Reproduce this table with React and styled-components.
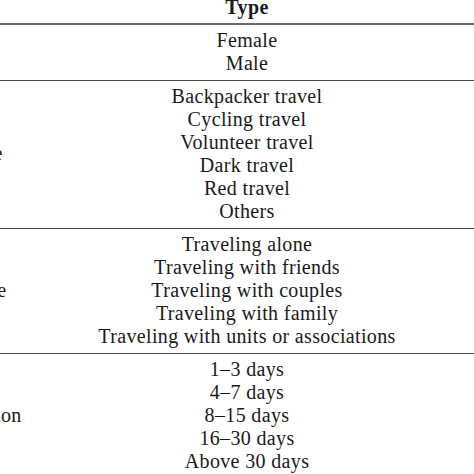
import styled, { createGlobalStyle } from "styled-components";

const GlobalStyle = createGlobalStyle`
  html, body {
    margin: 0;
    padding: 0;
    background: #fff;
    overflow: hidden;
  }
`;

const Page = styled.div`
  width: 474px;
  height: 474px;
  overflow: hidden;
  font-family: "Liberation Serif", "Times New Roman", serif;
  font-size: 20px;
  letter-spacing: 0.35px;
  line-height: 23px;
  color: #1a1a1a;
`;

const Table = styled.div`
  display: grid;
  grid-template-columns: 172px 334px 1fr;
  width: 660px;
  margin-left: -92px;
  margin-top: -4px;
`;

const Cell = styled.div`
  padding: ${({ $header }) => ($header ? "0 0 4px" : "3.5px 0 5.5px")};
  border-bottom: ${({ $header }) => ($header ? "2px solid #6a6a6a" : "1.5px solid #4a4a4a")};
  display: flex;
  flex-direction: column;
  justify-content: center;
  font-weight: ${({ $header }) => ($header ? 700 : 400)};
`;

const Label = styled(Cell)`
  text-align: left;
  white-space: nowrap;
`;

const Types = styled(Cell)`
  text-align: center;
  white-space: nowrap;
`;

const Spare = styled(Cell)``;

const rows = [
  { label: "Gender", items: ["Female", "Male"] },
  {
    label: "Travel type",
    items: ["Backpacker travel", "Cycling travel", "Volunteer travel", "Dark travel", "Red travel", "Others"],
  },
  {
    label: "Travel style",
    items: [
      "Traveling alone",
      "Traveling with friends",
      "Traveling with couples",
      "Traveling with family",
      "Traveling with units or associations",
    ],
  },
  {
    label: "Tour duration",
    items: ["1–3 days", "4–7 days", "8–15 days", "16–30 days", "Above 30 days"],
  },
];

export default function App() {
  return (
    <Page>
      <GlobalStyle />
      <Table>
        <Label $header>Variable</Label>
        <Types $header>Type</Types>
        <Spare $header />
        {rows.map((row) => (
          <>
            <Label key={row.label + "-l"}>{row.label}</Label>
            <Types key={row.label + "-t"}>
              {row.items.map((item) => (
                <span key={item}>{item}</span>
              ))}
            </Types>
            <Spare key={row.label + "-s"} />
          </>
        ))}
      </Table>
    </Page>
  );
}
